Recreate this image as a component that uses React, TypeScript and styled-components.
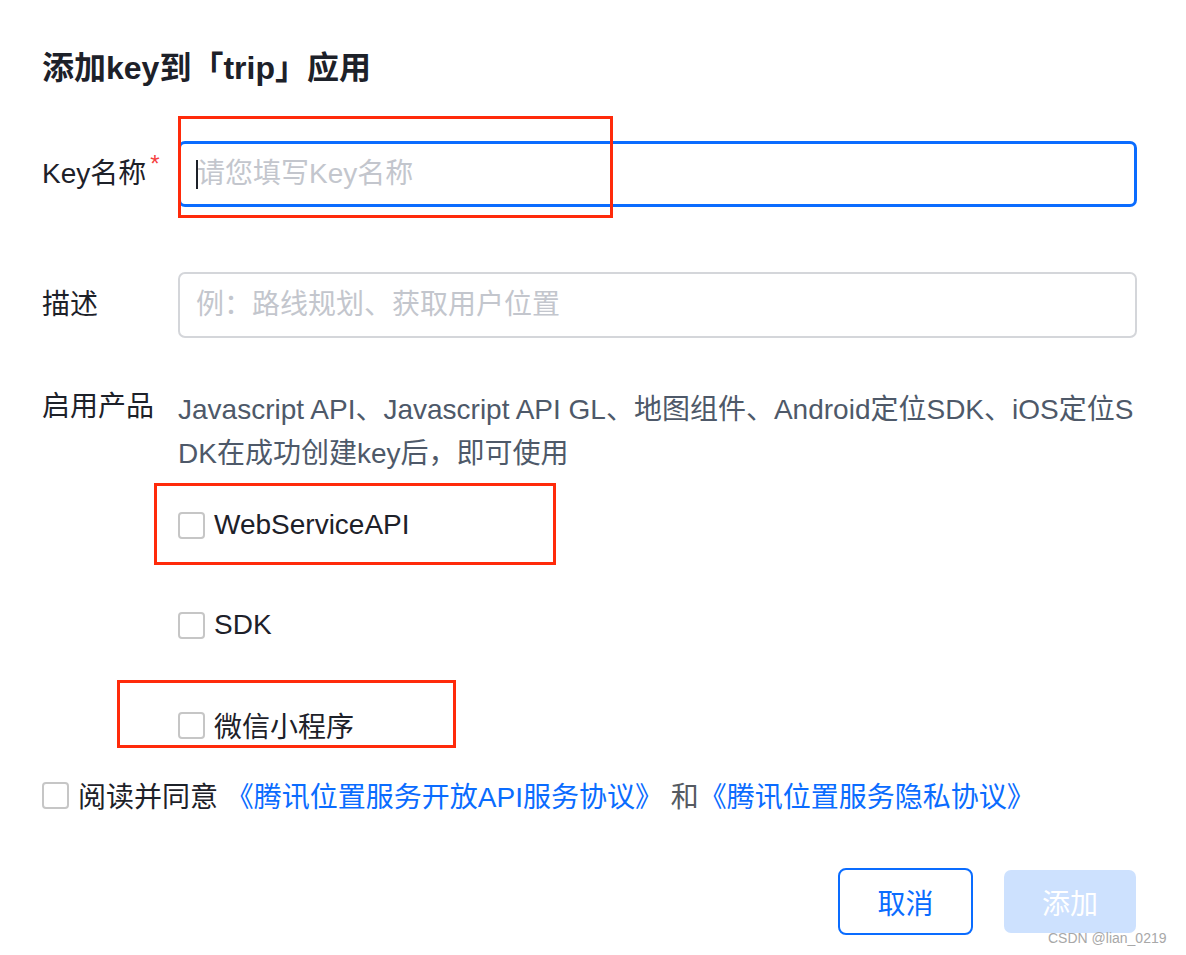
import React from 'react'
import styled, {createGlobalStyle} from 'styled-components'

const FONT = `"Liberation Sans", "Noto Sans CJK SC", sans-serif`
const BLUE = '#0a6cff'

const GlobalStyle = createGlobalStyle`
    html, body {
        margin: 0;
        padding: 0;
        background: #ffffff;
    }
    body {
        font-family: ${FONT};
    }
`

const products = ['WebServiceAPI', 'SDK', '微信小程序']

const App: React.FunctionComponent = () => {
    return (
        <Page>
            <GlobalStyle />
            <Title>添加key到「trip」应用</Title>

            <FormRow>
                <Label>
                    Key名称<Required>*</Required>
                </Label>
                <InputWrap>
                    <TextField focused placeholder="请您填写Key名称" />
                    <Caret />
                </InputWrap>
            </FormRow>

            <FormRow>
                <Label>描述</Label>
                <InputWrap>
                    <TextField placeholder="例：路线规划、获取用户位置" />
                </InputWrap>
            </FormRow>

            <ProductRow>
                <ProductLabel>启用产品</ProductLabel>
                <ProductBody>
                    <ProductNote>
                        Javascript API、Javascript API GL、地图组件、Android定位SDK、iOS定位SDK在成功创建key后，即可使用
                    </ProductNote>
                    <CheckList>
                        {products.map(name => (
                            <CheckItem key={name}>
                                <CheckBox />
                                <span>{name}</span>
                            </CheckItem>
                        ))}
                    </CheckList>
                </ProductBody>
            </ProductRow>

            <AgreeRow>
                <CheckBox />
                <span>阅读并同意 </span>
                <Link>《腾讯位置服务开放API服务协议》</Link>
                <AndText> 和</AndText>
                <Link>《腾讯位置服务隐私协议》</Link>
            </AgreeRow>

            <Footer>
                <CancelButton>取消</CancelButton>
                <SubmitButton disabled>添加</SubmitButton>
            </Footer>

            <Annotation style={{left: 178, top: 116, width: 435, height: 102}} />
            <Annotation style={{left: 154, top: 483, width: 402, height: 82}} />
            <Annotation style={{left: 117, top: 680, width: 339, height: 68}} />
            <Watermark>CSDN @lian_0219</Watermark>
        </Page>
    )
}

export default App

const Page = styled.div`
    position: relative;
    width: 1186px;
    height: 955px;
    box-sizing: border-box;
    padding: 48px 49px 0 42px;
    font-family: ${FONT};
    color: #1d2129;
    overflow: hidden;
`

const Title = styled.h1`
    margin: 0 0 53px;
    font-size: 32px;
    line-height: 40px;
    font-weight: 700;
    color: #1d2129;
`

const FormRow = styled.div`
    display: flex;
    flex-direction: row;
    align-items: center;
    margin-bottom: 65px;
`

const Label = styled.div`
    position: relative;
    width: 136px;
    flex-shrink: 0;
    font-size: 28px;
    line-height: 66px;
    color: #1d2129;
`

const Required = styled.span`
    position: absolute;
    top: -10px;
    margin-left: 4px;
    color: #f53f3f;
    font-size: 24px;
`

const InputWrap = styled.div`
    position: relative;
    flex: 1;
`

const TextField = styled.input<{focused?: boolean}>`
    display: block;
    width: 100%;
    height: 66px;
    box-sizing: border-box;
    padding: 0 16px;
    border: ${({focused}) => (focused ? `3px solid ${BLUE}` : '2px solid #d4d6da')};
    border-radius: 7px;
    outline: none;
    font-family: ${FONT};
    font-size: 28px;
    color: #1d2129;
    background: #fff;

    &::placeholder {
        color: #c3c6cd;
    }
`

const Caret = styled.span`
    position: absolute;
    left: 18px;
    top: 19px;
    width: 2px;
    height: 29px;
    background: #1d2129;
`

const ProductRow = styled.div`
    display: flex;
    flex-direction: row;
    align-items: flex-start;
    margin-top: -15px;
`

const ProductLabel = styled.div`
    width: 136px;
    flex-shrink: 0;
    font-size: 28px;
    line-height: 44px;
    margin-top: -3px;
    color: #1d2129;
`

const ProductBody = styled.div`
    flex: 1;
    display: flex;
    flex-direction: column;
`

const ProductNote = styled.div`
    font-size: 28px;
    line-height: 44px;
    color: #4e5969;
    word-break: break-all;
`

const CheckList = styled.div`
    display: flex;
    flex-direction: column;
    gap: 50px;
    margin-top: 24px;
`

const CheckItem = styled.label`
    display: flex;
    flex-direction: row;
    align-items: center;
    gap: 9px;
    height: 50px;
    font-size: 28px;
    color: #1d2129;
`

const CheckBox = styled.span`
    display: inline-block;
    width: 27px;
    height: 27px;
    box-sizing: border-box;
    border: 2px solid #c6c6c6;
    border-radius: 4px;
    background: #fff;
    flex-shrink: 0;
`

const AgreeRow = styled.div`
    display: flex;
    flex-direction: row;
    align-items: center;
    height: 50px;
    margin-top: 20px;
    font-size: 28px;
    color: #1d2129;
    white-space: pre;

    ${CheckBox} {
        margin-right: 9px;
    }
`

const Link = styled.span`
    color: ${BLUE};
`

const AndText = styled.span`
    color: #555a61;
`

const Footer = styled.div`
    display: flex;
    flex-direction: row;
    justify-content: flex-end;
    align-items: center;
    gap: 31px;
    margin-top: 48px;
`

const CancelButton = styled.button`
    width: 135px;
    height: 67px;
    box-sizing: border-box;
    border: 2px solid ${BLUE};
    border-radius: 8px;
    background: #fff;
    color: ${BLUE};
    font-family: ${FONT};
    font-size: 28px;
    cursor: pointer;
`

const SubmitButton = styled.button`
    width: 132px;
    height: 63px;
    border: none;
    border-radius: 7px;
    background: #cde1fe;
    color: #ffffff;
    font-family: ${FONT};
    font-size: 28px;
    margin-right: 1px;
`

const Annotation = styled.div`
    position: absolute;
    box-sizing: border-box;
    border: 3px solid #ff2a0a;
    pointer-events: none;
`

const Watermark = styled.div`
    position: absolute;
    left: 1048px;
    top: 930px;
    font-family: ${FONT};
    font-size: 14px;
    color: #a8a8a8;
    white-space: nowrap;
`
